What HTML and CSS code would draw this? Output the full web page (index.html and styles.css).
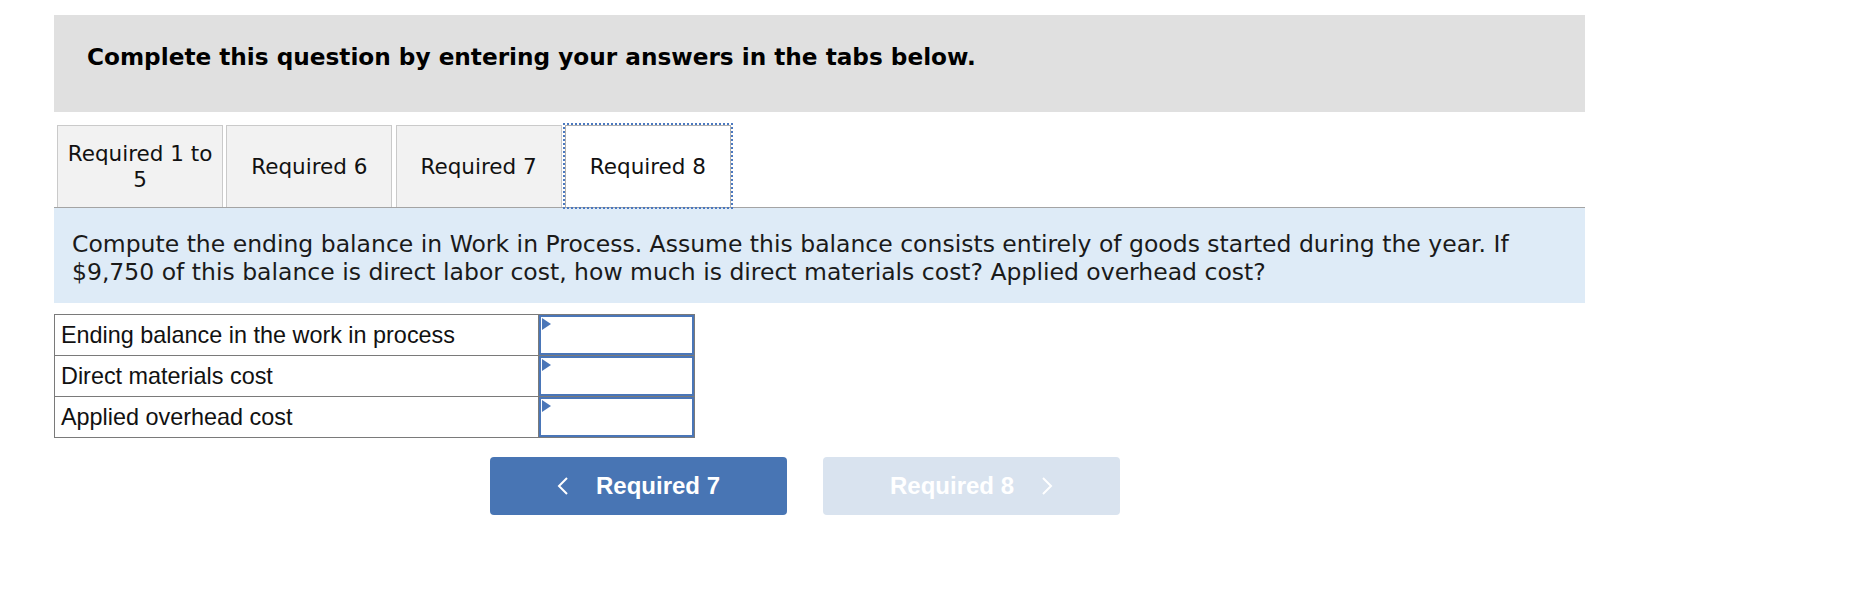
FILE: index.html
```html
<!DOCTYPE html>
<html>
<head>
<meta charset="utf-8">
<link rel="stylesheet" href="styles.css">
</head>
<body>
<div class="page">
  <div class="banner">Complete this question by entering your answers in the tabs below.</div>
  <div class="tabs">
    <div class="tab">Required 1 to 5</div>
    <div class="tab">Required 6</div>
    <div class="tab">Required 7</div>
    <div class="tab active">Required 8</div>
  </div>
  <div class="prompt">Compute the ending balance in Work in Process. Assume this balance consists entirely of goods started during the year. If $9,750 of this balance is direct labor cost, how much is direct materials cost? Applied overhead cost?</div>
  <table class="answers">
    <tr><td class="label">Ending balance in the work in process</td><td class="entry"><div class="box"><span class="flag"></span></div></td></tr>
    <tr><td class="label">Direct materials cost</td><td class="entry"><div class="box"><span class="flag"></span></div></td></tr>
    <tr><td class="label">Applied overhead cost</td><td class="entry"><div class="box"><span class="flag"></span></div></td></tr>
  </table>
  <div class="nav">
    <div class="btn prev">
      <svg class="chev" width="12" height="18" viewBox="0 0 12 18"><polyline points="10,1 2,9 10,17" fill="none" stroke="#fff" stroke-width="2"/></svg>
      <span>Required 7</span>
    </div>
    <div class="btn next">
      <span>Required 8</span>
      <svg class="chev" width="12" height="18" viewBox="0 0 12 18"><polyline points="2,1 10,9 2,17" fill="none" stroke="#fff" stroke-width="2"/></svg>
    </div>
  </div>
</div>
</body>
</html>
```

FILE: styles.css
```css
html, body {
  margin: 0;
  padding: 0;
  background: #fff;
}
.page {
  padding: 15px 0 0 54px;
  width: 1531px;
  font-family: "DejaVu Sans", Verdana, sans-serif;
  color: #111;
}
.banner {
  background: #e0e0e0;
  height: 97px;
  box-sizing: border-box;
  padding: 28px 0 0 33px;
  font-size: 23.2px;
  line-height: 27px;
  font-weight: bold;
  color: #000;
}
.tabs {
  display: flex;
  gap: 3.3px;
  margin-top: 13px;
  padding-left: 3px;
  height: 82px;
}
.tab {
  width: 166px;
  height: 82px;
  box-sizing: border-box;
  border: 1px solid #cacaca;
  border-bottom: none;
  background: #f2f2f2;
  display: flex;
  align-items: center;
  justify-content: center;
  text-align: center;
  padding: 0 9px;
  font-size: 21.5px;
  line-height: 26px;
  color: #111;
}
.tab.active {
  background: #fff;
  border-color: #b0b0b0;
  outline: 2px dotted #4a78bf;
  position: relative;
}
.prompt {
  background: #deebf7;
  border-top: 1px solid #a4a4a4;
  height: 91px;
  box-sizing: content-box;
  padding: 4px 30px 0 18px;
  display: flex;
  align-items: center;
  font-size: 23.5px;
  line-height: 28px;
  color: #1a1a1a;
}
.answers {
  border-collapse: collapse;
  margin-top: 11px;
  font-family: "Liberation Sans", Arial, sans-serif;
  font-size: 23.4px;
  color: #111;
}
.answers td {
  border: 1px solid #7a7a7a;
  height: 40px;
  padding: 0;
}
.answers td.label {
  width: 477px;
  padding-left: 6px;
}
.answers td.entry {
  width: 155px;
}
.box {
  position: relative;
  height: 40px;
  box-sizing: border-box;
  border: 2px solid #4a76b8;
  background: #fff;
}
.flag {
  position: absolute;
  left: 1px;
  top: 1px;
  width: 0;
  height: 0;
  border-top: 6px solid transparent;
  border-bottom: 6px solid transparent;
  border-left: 9px solid #4a76b8;
}
.nav {
  display: flex;
  gap: 36px;
  margin-top: 19px;
  padding-left: 436px;
}
.btn {
  width: 297px;
  height: 58px;
  border-radius: 4px;
  display: flex;
  align-items: center;
  justify-content: center;
  gap: 27px;
  font-family: "Liberation Sans", Arial, sans-serif;
  font-weight: bold;
  font-size: 24px;
  color: #fff;
}
.btn.prev {
  background: #4875b4;
}
.btn.next {
  background: #d9e3ef;
}
.chev {
  display: block;
}
```
